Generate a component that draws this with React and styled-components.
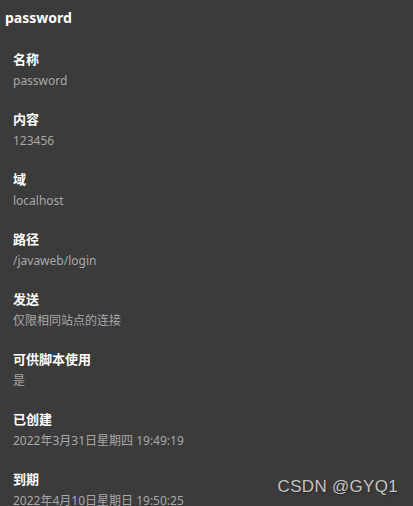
import styled, { createGlobalStyle } from 'styled-components';

const GlobalStyle = createGlobalStyle`
  html, body {
    margin: 0;
    padding: 0;
    background: #3b3b3b;
  }
  body {
    font-family: "Noto Sans", "Noto Sans CJK SC", sans-serif;
  }
`;

const Panel = styled.div`
  position: relative;
  width: 413px;
  height: 506px;
  overflow: hidden;
  background: #3b3b3b;
`;

const Title = styled.h1`
  margin: 0;
  padding: 10px 0 0 5px;
  font-size: 14px;
  line-height: 16px;
  font-weight: 700;
  color: #ffffff;
`;

const FieldList = styled.dl`
  display: flex;
  flex-direction: column;
  gap: 18px;
  margin: 0;
  padding: 23px 0 0 13px;
`;

const Field = styled.div`
  display: flex;
  flex-direction: column;
  gap: 2px;
`;

const Label = styled.dt`
  font-size: 13px;
  line-height: 20px;
  font-weight: 700;
  color: #ffffff;
`;

const Value = styled.dd`
  margin: 0;
  font-size: 12px;
  line-height: 20px;
  color: #a8a8a8;
`;

const Watermark = styled.div`
  position: absolute;
  right: 15px;
  bottom: 9px;
  font-family: "Liberation Sans", Arial, sans-serif;
  font-size: 17px;
  letter-spacing: 0.3px;
  color: #c4c4c4;
  text-shadow: 1px 1px 1px rgba(0, 0, 0, 0.35);
`;

const fields = [
  ['名称', 'password'],
  ['内容', '123456'],
  ['域', 'localhost'],
  ['路径', '/javaweb/login'],
  ['发送', '仅限相同站点的连接'],
  ['可供脚本使用', '是'],
  ['已创建', '2022年3月31日星期四 19:49:19'],
  ['到期', '2022年4月10日星期日 19:50:25'],
];

const App = () => (
  <Panel>
    <GlobalStyle />
    <Title>password</Title>
    <FieldList>
      {fields.map(([label, value]) => (
        <Field key={label}>
          <Label>{label}</Label>
          <Value>{value}</Value>
        </Field>
      ))}
    </FieldList>
    <Watermark>CSDN @GYQ1</Watermark>
  </Panel>
);

export default App;
